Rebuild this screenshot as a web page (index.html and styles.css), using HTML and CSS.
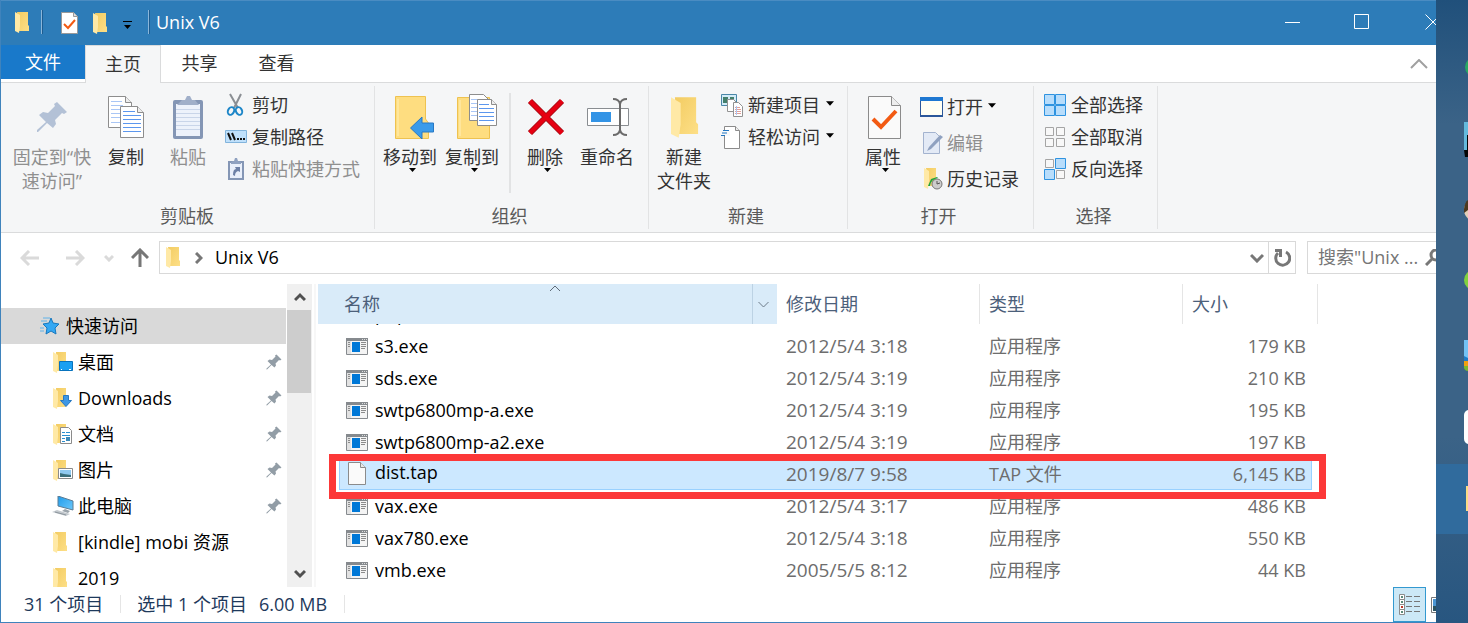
FILE: index.html
```html
<!DOCTYPE html>
<html lang="zh-CN">
<head>
    <meta charset="UTF-8">
    <meta name="viewport" content="width=device-width, initial-scale=1.0">
    <title>Unix V6</title>
    <link rel="stylesheet" href="styles.css">
</head>
<body>
    <!-- Shared icons -->
    <svg class="sprite" width="0" height="0" aria-hidden="true">
        <defs>
            <linearGradient id="fold" x1="0" x2="1" y1="0" y2="1">
                <stop offset="0" stop-color="#f3cc62"/><stop offset="1" stop-color="#fddf87"/>
            </linearGradient>
            <linearGradient id="screen" x1="0" x2="1" y1="0" y2="1">
                <stop offset="0" stop-color="#1f9bea"/><stop offset="1" stop-color="#6cc8fb"/>
            </linearGradient>
        </defs>
        <symbol id="folder" viewBox="0 0 15 21">
            <path d="M2 0h11v13l1 1v5H4z" fill="url(#fold)"/>
            <path d="M0 0l5 3v11l-1 7-4-2z" fill="#ffe9a6"/>
        </symbol>
        <symbol id="page" viewBox="0 0 18 23">
            <path d="M.5.5h12l5 5v17H.5z" fill="#fafafa" stroke="#8b8b8b"/>
            <path d="M12.500.5v5h5" fill="#e8e8e8" stroke="#8b8b8b"/>
        </symbol>
        <symbol id="exe" viewBox="0 0 22 17">
            <path d="M.5.5h21v16H.5z" fill="#f4f4f4" stroke="#868a8e"/>
            <path d="M0 0h22v3H0z" fill="#868a8e"/>
            <path d="M1 3h4v13H1z" fill="#e2e2e2"/>
            <path d="M2 4.500h2M2 6.500h2M2 8.500h2M15 4.500h5M15 6.500h5M15 8.500h5M15 10.500h4" stroke="#8b8b8b"/>
            <path d="M16 1.500h1M18 1.500h1M20 1.500h1" stroke="#ddd"/>
            <path d="M6 4h8v10H6z" fill="#0078d7"/>
        </symbol>
        <symbol id="pin" viewBox="0 0 32 32">
            <path d="M21 1l10 10-3 2-2-1-7 7 1 4-3 4-6-5-9 9H1v-2l9-8-7-7 4-3 5 1 7-7-1-2z"/>
        </symbol>
        <symbol id="docs" viewBox="0 0 37 43">
            <path d="M.5.5h17l6 6v25H.5z" fill="#fff" stroke="#8d8d8d"/>
            <path d="M17.500.5v6h6" fill="#eee" stroke="#8d8d8d"/>
            <path d="M3 5.500h11M3 9.500h12M3 13.500h12M3 17.500h12M3 21.500h9M3 26.500h9" stroke="#a9c6f5"/>
            <path d="M12.500 10.500h17l6 6v25h-23z" fill="#fff" stroke="#8d8d8d"/>
            <path d="M29.500 10.500v6h6" fill="#eee" stroke="#8d8d8d"/>
            <path d="M15 15.500h12M15 19.500h18M15 23.500h18M15 27.500h18M15 31.500h18M15 35.500h18" stroke="#5c97ee"/>
        </symbol>
        <symbol id="arrow" viewBox="0 0 7 4"><path d="M0 0h7L3.500 4z"/></symbol>
    </svg>

    <div class="window">
        <header class="titlebar">
            <svg class="app-icon" width="15" height="21"><use href="#folder"/></svg>
            <span class="title-sep"></span>
            <button class="quick" aria-label="属性">
                <svg width="17" height="22" viewBox="0 0 17 22"><path d="M.5.5h12l4 4v17H.5z" fill="#fff" stroke="#999"/><path d="M12.500.5v4h4" fill="#ddd" stroke="#999"/><path d="M3 12l4 4 7-8" fill="none" stroke="#f25a13" stroke-width="2"/></svg>
            </button>
            <button class="quick" aria-label="新建文件夹"><svg width="15" height="21"><use href="#folder"/></svg></button>
            <button class="quick quick-more" aria-label="自定义"><svg width="9" height="8" viewBox="0 0 9 8"><path d="M0 0h9v1H0zM1 4h7L4.500 8z"/></svg></button>
            <span class="title-sep"></span>
            <h1>Unix V6</h1>
            <div class="controls">
                <button aria-label="最小化"><svg width="16" height="16" viewBox="0 0 16 16"><path d="M0 8.500h15"/></svg></button>
                <button aria-label="最大化"><svg width="16" height="16" viewBox="0 0 16 16"><path d="M.5.5h14v14H.5z"/></svg></button>
                <button class="close" aria-label="关闭"><svg width="16" height="16" viewBox="0 0 16 16"><path d="M.5.5l15 15M15.500.5l-15 15"/></svg></button>
            </div>
        </header>

        <nav class="tabs">
            <button class="tab file">文件</button>
            <button class="tab active">主页</button>
            <button class="tab">共享</button>
            <button class="tab">查看</button>
            <button class="collapse" aria-label="折叠"><svg width="18" height="10" viewBox="0 0 18 10"><path d="M1 9l8-8 8 8" fill="none" stroke="#a0a0a0" stroke-width="2"/></svg></button>
        </nav>

        <div class="ribbon">
            <section class="group clipboard">
                <div class="group-body">
                    <button class="big pin-button" disabled>
                        <span class="big-icon"><svg width="32" height="32" fill="#b3c1d6"><use href="#pin"/></svg></span>
                        固定到“快速访问”
                    </button>
                    <button class="big">
                        <span class="big-icon"><svg width="37" height="43"><use href="#docs"/></svg></span>
                        复制
                    </button>
                    <button class="big" disabled>
                        <span class="big-icon"><svg width="30" height="43" viewBox="0 0 30 43"><rect y="4" width="30" height="39" rx="2" fill="#8496b5"/><path d="M3 8h24v32H3z" fill="#edf2fb"/><path d="M3 13.500h24M3 17.500h24M3 21.500h24M3 25.500h24M3 29.500h24M3 33.500h24" stroke="#c9d5e9"/><path d="M4 9l5-5h3l2-4h3l2 4h3l4 5z" fill="#a0afc9"/></svg></span>
                        粘贴
                    </button>
                    <div class="small-list">
                        <button class="small">
                            <svg width="22" height="24" viewBox="0 0 22 24"><path d="M5 1l8 14M16 1L9 15" stroke="#8b8f94" stroke-width="2"/><ellipse cx="6" cy="18" rx="3" ry="4" transform="rotate(25 6 18)" fill="none" stroke="#1d86c8" stroke-width="2"/><ellipse cx="14" cy="18" rx="3" ry="4" transform="rotate(-25 14 18)" fill="none" stroke="#1d86c8" stroke-width="2"/></svg>
                            剪切
                        </button>
                        <button class="small">
                            <svg width="22" height="14" viewBox="0 0 22 14"><path d="M.5.5h21v12H.5z" fill="#bfe0fb" stroke="#82b4dc"/><path d="M3 3l3 7M7 3l3 7" stroke="#111" stroke-width="2"/><path d="M12 9h2M15 9h2M18 9h2" stroke="#111" stroke-width="2"/></svg>
                            复制路径
                        </button>
                        <button class="small" disabled>
                            <svg width="22" height="23" viewBox="0 0 22 23"><path d="M4 4h14v17H4z" fill="#e9effa" stroke="#8496b5" stroke-width="2"/><path d="M6 4l3-1 1-3h2l1 3 3 1v2H6z" fill="#8fa1c0"/><path d="M8 17c0-4 1-6 3-6l-1-2h5v5l-2-1c-2 1-3 2-3 5z" fill="#6d80a6"/></svg>
                            粘贴快捷方式
                        </button>
                    </div>
                </div>
                <h2>剪贴板</h2>
            </section>

            <section class="group organize">
                <div class="group-body">
                    <button class="big">
                        <span class="big-icon"><svg width="40" height="43" viewBox="0 0 40 43"><path d="M1.500.5h30V23l3 4v15.500h-33z" fill="#fedd80" stroke="#eec250"/><path d="M4 3v37" stroke="#fff0b8"/><path d="M16.500 32L28 21v6h11.500v9H28v7z" fill="#3b9bea" stroke="#2878c4"/></svg></span>
                        移动到
                        <svg class="drop" width="7" height="4"><use href="#arrow"/></svg>
                    </button>
                    <button class="big">
                        <span class="big-icon"><svg width="41" height="46" viewBox="0 0 41 46"><path d="M1.500 3.500h32v41h-32z" fill="#fedd80" stroke="#eec250"/><path d="M4 6v36" stroke="#fff0b8"/><path d="M13.500.5h14l5 5v21h-19z" fill="#fff" stroke="#8d8d8d"/><path d="M15 5.500h10M15 9.500h10M15 13.500h8M15 17.500h8M15 21.500h8" stroke="#a9c6f5"/><path d="M21.500 5.500h14l5 5v21h-19z" fill="#fff" stroke="#8d8d8d"/><path d="M35.500 5.500v5h5" fill="#eee" stroke="#8d8d8d"/><path d="M23 10.500h10M23 14.500h15M23 18.500h15M23 22.500h15M23 26.500h15" stroke="#5c97ee"/></svg></span>
                        复制到
                        <svg class="drop" width="7" height="4"><use href="#arrow"/></svg>
                    </button>
                    <span class="group-sep"></span>
                    <button class="big">
                        <span class="big-icon centered"><svg width="38" height="38" viewBox="0 0 38 38"><path d="M3 3l32 32M35 3L3 35" stroke="#a80d15" stroke-width="6"/><path d="M3 3l32 32M35 3L3 35" stroke="#e60012" stroke-width="4"/></svg></span>
                        删除
                        <svg class="drop" width="7" height="4"><use href="#arrow"/></svg>
                    </button>
                    <button class="big">
                        <span class="big-icon centered"><svg width="42" height="40" viewBox="0 0 42 40"><path d="M.5 11.500h41v17H.5z" fill="#fff" stroke="#898d91"/><path d="M4 15h20v10H4z" fill="#3394e6"/><path d="M26 2q6 0 7 5v26q-1 5-7 5M40 2q-6 0-7 5M33 33q1 5 7 5" fill="none" stroke="#6b6b6b" stroke-width="2"/></svg></span>
                        重命名
                    </button>
                </div>
                <h2>组织</h2>
            </section>

            <section class="group create">
                <div class="group-body">
                    <button class="big">
                        <span class="big-icon centered"><svg width="29" height="41"><use href="#folder"/></svg></span>
                        新建<br>文件夹
                    </button>
                    <div class="small-list">
                        <button class="small">
                            <svg width="22" height="23" viewBox="0 0 22 23"><path d="M.5.500h15v11H.5z" fill="#d3ecf8" stroke="#4a87a8"/><path d="M2 3h5v6H2zM9 3h4v3H9z" fill="#44806c"/><path d="M6.500 5.500h6l3 3v9h-9z" fill="#fff" stroke="#929292"/><path d="M12.500 8.500h5l4 4v10h-9z" fill="#fff" stroke="#929292"/><path d="M14 13.500h5M14 15.500h6M14 17.500h6M14 19.500h6" stroke="#e0a09a"/><path d="M15.500 12v9" stroke="#a9c6f5"/></svg>
                            新建项目
                            <svg class="side-drop" width="8" height="5"><use href="#arrow"/></svg>
                        </button>
                        <button class="small">
                            <svg width="22" height="23" viewBox="0 0 22 23"><path d="M3.500.5h11l4 4v18h-15z" fill="#fff" stroke="#8b8b8b"/><path d="M14.500.5v4h4" fill="#eee" stroke="#8b8b8b"/><path d="M2 4h7v6H0z" fill="#f8f9fa"/><path d="M2 4.500h6M1 7h5M0 9.500h4" stroke="#1f74c0"/></svg>
                            轻松访问
                            <svg class="side-drop" width="8" height="5"><use href="#arrow"/></svg>
                        </button>
                    </div>
                </div>
                <h2>新建</h2>
            </section>

            <section class="group open">
                <div class="group-body">
                    <button class="big">
                        <span class="big-icon centered"><svg width="33" height="43" viewBox="0 0 33 43"><path d="M.5.5h23l9 9v33H.5z" fill="#fafafa" stroke="#8b8b8b"/><path d="M23.500.5v9h9" fill="#eee" stroke="#8b8b8b"/><path d="M5 23l8 8 15-16" fill="none" stroke="#f25a13" stroke-width="4"/></svg></span>
                        属性
                        <svg class="drop" width="7" height="4"><use href="#arrow"/></svg>
                    </button>
                    <div class="small-list">
                        <button class="small">
                            <svg width="23" height="20" viewBox="0 0 23 20"><path d="M.5.5h22v18H.5z" fill="#fffff4" stroke="#2b579a"/><path d="M0 18h23v2H0z" fill="#2b579a"/><path d="M0 0h23v4H0z" fill="#1e78d2"/></svg>
                            打开
                            <svg class="side-drop" width="8" height="5"><use href="#arrow"/></svg>
                        </button>
                        <button class="small" disabled>
                            <svg width="23" height="22" viewBox="0 0 23 22"><path d="M3.500.5h12l4 4v17h-16z" fill="#e3eaf6" stroke="#a3b3cf"/><path d="M7 19l2-4L20 3l3 2L11 17z" fill="#8fa1c0"/></svg>
                            编辑
                        </button>
                        <button class="small">
                            <svg width="23" height="22" viewBox="0 0 23 22"><path d="M6 0h10v18H8z" fill="url(#fold)"/><path d="M4 0l5 3v10l-1 8-4-2z" fill="#ffe9a6"/><circle cx="17" cy="16" r="5" fill="#ccc" stroke="#777"/><path d="M17 13v3l3-1" fill="none" stroke="#555"/><path d="M10 18q1-7 8-8l-1-1-6 2-3 7z" fill="#23a33a"/></svg>
                            历史记录
                        </button>
                    </div>
                </div>
                <h2>打开</h2>
            </section>

            <section class="group select">
                <div class="group-body">
                    <div class="small-list">
                        <button class="small">
                            <svg width="22" height="22" viewBox="0 0 22 22" fill="#b8ddfb" stroke="#2f93e0"><path d="M.5.5h10v10H.5zM11.500.5h10v10h-10zM.5 11.500h10v10H.5zM11.500 11.500h10v10h-10z"/></svg>
                            全部选择
                        </button>
                        <button class="small">
                            <svg width="22" height="22" viewBox="0 0 22 22" fill="#f8f8f8" stroke="#a5a5a5"><path d="M1.500 1.500h8v8h-8zM12.500 1.500h8v8h-8zM1.500 12.500h8v8h-8zM12.500 12.500h8v8h-8z"/></svg>
                            全部取消
                        </button>
                        <button class="small">
                            <svg width="22" height="22" viewBox="0 0 22 22"><path d="M1.500 1.500h8v8h-8zM12.500 12.500h8v8h-8z" fill="#f8f8f8" stroke="#a5a5a5"/><path d="M11.500.5h10v10h-10zM.5 11.500h10v10H.5z" fill="#b8ddfb" stroke="#2f93e0"/></svg>
                            反向选择
                        </button>
                    </div>
                </div>
                <h2>选择</h2>
            </section>
        </div>

        <div class="address-row">
            <button class="nav-button" aria-label="后退"><svg width="19" height="16" viewBox="0 0 19 16"><path d="M19 8H2M9 1L2 8l7 7" stroke="#dadada"/></svg></button>
            <button class="nav-button" aria-label="前进"><svg width="19" height="16" viewBox="0 0 19 16"><path d="M0 8h17M10 1l7 7-7 7" stroke="#dadada"/></svg></button>
            <button class="nav-button recent" aria-label="最近"><svg width="10" height="8" viewBox="0 0 10 8"><path d="M1 2l4 4 4-4" stroke="#dadada"/></svg></button>
            <button class="nav-button up" aria-label="上移"><svg width="18" height="19" viewBox="0 0 18 19"><path d="M9 19V2M1 10l8-8 8 8" stroke="#777"/></svg></button>
            <div class="address">
                <svg width="15" height="21"><use href="#folder"/></svg>
                <svg class="crumb-arrow" width="8" height="12" viewBox="0 0 8 12"><path d="M1 1l5 5-5 5" fill="none" stroke="#777" stroke-width="3"/></svg>
                <a href="#">Unix V6</a>
                <button class="history" aria-label="历史"><svg width="14" height="10" viewBox="0 0 14 10"><path d="M1 2l6 6 6-6" fill="none" stroke="#777" stroke-width="3"/></svg></button>
                <button class="refresh" aria-label="刷新"><svg width="17" height="18" viewBox="0 0 17 18"><path d="M12 3a7 7 0 1 1-8 1" fill="none" stroke="#777" stroke-width="3"/><path d="M1 0h7v8H5V3H1z" fill="#777"/></svg></button>
            </div>
            <div class="search">
                <input type="text" aria-label="搜索" placeholder="搜索&quot;Unix ...">
                <svg width="17" height="17" viewBox="0 0 17 17"><circle cx="11" cy="6" r="5" fill="none" stroke="#777" stroke-width="3"/><path d="M7 10l-6 6" stroke="#777" stroke-width="3"/></svg>
            </div>
        </div>

        <main class="content">
            <nav class="tree">
                <a class="root" href="#">
                    <svg width="22" height="20" viewBox="1 0 22 20"><path d="M12 2l2 5 6 1-4 4 1 6-5-3-5 3 1-6-4-4 6-1z" fill="#35a8f3" stroke="#1878be"/><path d="M4 2h7M2 5h6M0 12h5M1 15h4" stroke="#61b2e8"/></svg>
                    快速访问
                </a>
                <a href="#"><svg width="22" height="21" viewBox="0 0 22 21"><path d="M4 0h10v19H5z" fill="url(#fold)"/><path d="M1 0l5 3v10l-1 8-4-2z" fill="#ffe9a6"/><path d="M7.500 9.500h13v9h-13z" fill="#1ba0f2" stroke="#0873bd"/><path d="M9 17.500h1M17 17.500h2" stroke="#fff"/></svg>桌面<svg class="pinned"><use href="#pin"/></svg></a>
                <a href="#"><svg width="22" height="21" viewBox="0 0 22 21"><path d="M4 0h10v19H5z" fill="url(#fold)"/><path d="M1 0l5 3v10l-1 8-4-2z" fill="#ffe9a6"/><path d="M11.500 7.500h5v5h3l-5.500 6-5.500-6h3z" fill="#3e97e4" stroke="#2678c2"/></svg>Downloads<svg class="pinned"><use href="#pin"/></svg></a>
                <a href="#"><svg width="22" height="21" viewBox="0 0 22 21"><path d="M4 0h10v19H5z" fill="url(#fold)"/><path d="M1 0l5 3v10l-1 8-4-2z" fill="#ffe9a6"/><path d="M8.500 3.500h8l3 3v13h-11z" fill="#fff" stroke="#8b8b8b"/><path d="M10 8.500h3M14 8.500h4M10 11.500h8M10 14.500h3M10 17.500h3" stroke="#2c8fd0"/><path d="M14 13h4v4h-4z" fill="#3d89b8"/></svg>文档<svg class="pinned"><use href="#pin"/></svg></a>
                <a href="#"><svg width="22" height="21" viewBox="0 0 22 21"><path d="M4 0h10v19H5z" fill="url(#fold)"/><path d="M1 0l5 3v10l-1 8-4-2z" fill="#ffe9a6"/><path d="M6.500 8.500h14v10h-14z" fill="#fff" stroke="#8b8b8b"/><path d="M8 10h11v7H8z" fill="#8fc9f0"/><path d="M8 13l4 1 7 1v2H8z" fill="#3b6f7c"/></svg>图片<svg class="pinned"><use href="#pin"/></svg></a>
                <a href="#"><svg width="22" height="21" viewBox="0 0 22 21"><path d="M6 0l15 5v9L6 10z" fill="url(#screen)" stroke="#5b7c94"/><path d="M13 13l5 2-2 2-6-2z" fill="#9aa3aa"/><path d="M0 16l5-2 13 4-4 2z" fill="#c3c9ce"/><path d="M3 16l11 3" stroke="#8d969d"/></svg>此电脑<svg class="pinned"><use href="#pin"/></svg></a>
                <a href="#"><svg width="22" height="21" viewBox="-1 0 22 21"><path d="M2 0h11v13l1 1v5H4z" fill="url(#fold)"/><path d="M0 0l5 3v11l-1 7-4-2z" fill="#ffe9a6"/></svg>[kindle] mobi 资源</a>
                <a href="#"><svg width="22" height="21" viewBox="-1 0 22 21"><path d="M2 0h11v13l1 1v5H4z" fill="url(#fold)"/><path d="M0 0l5 3v11l-1 7-4-2z" fill="#ffe9a6"/></svg>2019</a>
            </nav>
            <div class="scrollbar">
                <button aria-label="向上"><svg width="12" height="10" viewBox="0 0 12 10"><path d="M1 8l5-5 5 5" fill="none" stroke="#505050" stroke-width="3"/></svg></button>
                <div class="thumb"></div>
                <button class="down" aria-label="向下"><svg width="12" height="10" viewBox="0 0 12 10"><path d="M1 2l5 5 5-5" fill="none" stroke="#505050" stroke-width="3"/></svg></button>
            </div>
            <div class="files">
                <table>
                    <colgroup><col class="col-name"><col class="col-date"><col class="col-date"><col class="col-size"></colgroup>
                    <thead>
                        <tr>
                            <th class="sorted">
                                <div class="sorted-head">
                                    <span>名称</span>
                                    <svg class="sort-mark" width="12" height="7" viewBox="0 0 12 7"><path d="M1 6l5-5 5 5" fill="none" stroke="#5f6b78"/></svg>
                                    <button aria-label="筛选"><svg width="11" height="7" viewBox="0 0 11 7"><path d="M.5 1l5 5 5-5" fill="none" stroke="#6d7a88"/></svg></button>
                                </div>
                            </th>
                            <th>修改日期</th>
                            <th>类型</th>
                            <th>大小</th>
                        </tr>
                    </thead>
                    <tbody>
                        <tr class="cut"><td colspan="4"><div>pdp9.exe</div></td></tr>
                        <tr><td><svg width="22" height="17"><use href="#exe"/></svg>s3.exe</td><td>2012/5/4 3:18</td><td>应用程序</td><td>179 KB</td></tr>
                        <tr><td><svg width="22" height="17"><use href="#exe"/></svg>sds.exe</td><td>2012/5/4 3:19</td><td>应用程序</td><td>210 KB</td></tr>
                        <tr><td><svg width="22" height="17"><use href="#exe"/></svg>swtp6800mp-a.exe</td><td>2012/5/4 3:19</td><td>应用程序</td><td>195 KB</td></tr>
                        <tr><td><svg width="22" height="17"><use href="#exe"/></svg>swtp6800mp-a2.exe</td><td>2012/5/4 3:19</td><td>应用程序</td><td>197 KB</td></tr>
                        <tr class="selected"><td><svg width="22" height="23"><use href="#page"/></svg>dist.tap</td><td>2019/8/7 9:58</td><td>TAP 文件</td><td>6,145 KB</td></tr>
                        <tr><td><svg width="22" height="17"><use href="#exe"/></svg>vax.exe</td><td>2012/5/4 3:17</td><td>应用程序</td><td>486 KB</td></tr>
                        <tr><td><svg width="22" height="17"><use href="#exe"/></svg>vax780.exe</td><td>2012/5/4 3:18</td><td>应用程序</td><td>550 KB</td></tr>
                        <tr><td><svg width="22" height="17"><use href="#exe"/></svg>vmb.exe</td><td>2005/5/5 8:12</td><td>应用程序</td><td>44 KB</td></tr>
                    </tbody>
                </table>
            </div>
        </main>

        <footer class="statusbar">
            <span>31 个项目</span>
            <span class="status-sep"></span>
            <span>选中 1 个项目</span>
            <span class="total">6.00 MB</span>
            <span class="status-sep"></span>
            <div class="views">
                <button class="view on" aria-label="详细信息"><svg width="21" height="21" viewBox="0 0 21 21"><path d="M.5.5h5v5h-5zM.5 5.500h5v5h-5zM.5 10.500h5v5h-5zM.5 15.500h5v5h-5z" fill="#fff" stroke="#8b8b8b"/><path d="M7 2.500h6M15 2.500h6M7 7.500h6M15 7.500h6M7 12.500h6M15 12.500h6M7 17.500h6M15 17.500h6" stroke="#777"/><path d="M2 2h2v2H2zM2 7h2v2H2zM2 17h2v2H2z" fill="#5b8a7a"/><path d="M2 12h2v2H2z" fill="#c0392b"/></svg></button>
                <button class="view" aria-label="大图标"><svg width="20" height="16" viewBox="0 0 20 16"><path d="M.5.5h19v15H.5z" fill="#fff" stroke="#777"/><path d="M2 2h16v12H2z" fill="#4b95d2"/><path d="M2 9h16v5H2z" fill="#2b5360"/></svg></button>
            </div>
        </footer>
    </div>

    <!-- Desktop behind the window -->
    <aside class="desktop">
        <svg width="32" height="623" viewBox="0 0 32 623">
            <path d="M0 464h32v70H0z" fill="#306b9d"/>
            <circle cx="39" cy="67" r="10" fill="#27a862"/>
            <path d="M28 122h4v29h-4z" fill="#64b9dc"/><path d="M31 135h1v15h-1zM28 150h4v7h-3z" fill="#060606"/>
            <circle cx="39" cy="210" r="11" fill="#e3cfb9"/><path d="M28 209q1-7 4-9v10l-4 3z" fill="#4b3920"/>
            <circle cx="38" cy="280" r="10" fill="#82d13e"/>
            <path d="M28 340h4v20h-4z" fill="#73c2f5"/><path d="M28 356l4 2v4h-4z" fill="#1e7cc8"/><path d="M28 361h4v5h-4z" fill="#f0a010"/><path d="M28 366h4v5q-3 0-4-3z" fill="#7cb82f"/>
            <rect x="28" y="410" width="12" height="34" rx="5" fill="#fff"/>
            <path d="M30 486h2v25h-2z" fill="#fbdc86"/>
        </svg>
    </aside>
</body>
</html>
```

FILE: styles.css
```css
* {
    box-sizing: border-box;
}
body {
    display: flex;
    min-height: 100vh;
    margin: 0;
    overflow: hidden;
    font-family: "Open Sans", "Noto Sans CJK SC", sans-serif;
    font-size: 18px;
    line-height: 24px;
    color: #000;
}
button {
    padding: 0;
    border: none;
    background: none;
    font: inherit;
    color: #333;
}
button:disabled {
    color: #8f8f8f;
}
a {
    color: inherit;
    text-decoration: none;
}
svg {
    display: block;
    flex: none;
}
h1, h2 {
    margin: 0;
    font-size: 18px;
    font-weight: normal;
}
.sprite {
    position: absolute;
}
.window {
    display: flex;
    flex-direction: column;
    flex: 1;
    min-width: 0;
    overflow: hidden;
    background-color: #fff;
    border-left: 1px solid #3f83bc;
    border-bottom: 1px solid #3f83bc;
}
.desktop {
    flex: none;
    width: 32px;
    background: linear-gradient(#20507b, #3b6387 20%, #3b6387 70%, #285680);
}

/* Title bar */
.titlebar {
    display: flex;
    align-items: center;
    height: 45px;
    padding: 0 0 2px 14px;
    background-color: #2d7cb8;
    border-top: 1px solid #4a8cc2;
    color: #fff;
}
.title-sep {
    width: 2px;
    height: 24px;
    margin-left: 11px;
    background-color: #8ab6da;
    border-right: 1px solid #1d5c90;
}
.quick {
    margin-left: 18px;
    padding-top: 2px;
}
.quick + .quick {
    margin-left: 15px;
}
.quick-more {
    padding-top: 6px;
}
.titlebar .quick-more + .title-sep {
    margin-left: 16px;
}
.titlebar h1 {
    margin-left: 6px;
}
.controls {
    display: flex;
    margin-left: auto;
}
.controls button {
    display: flex;
    justify-content: center;
    width: 69px;
}
.controls .close {
    justify-content: flex-start;
    width: 40px;
    padding-left: 29px;
}
.controls svg {
    fill: none;
    stroke: #fff;
}

/* Ribbon tabs */
.tabs {
    display: flex;
    height: 38px;
    border-bottom: 1px solid #dadbdc;
}
.tab {
    width: 77px;
    padding-bottom: 1px;
}
.tab.file {
    width: 84px;
    height: 34px;
    background-color: #1979ca;
    color: #fff;
}
.tab.active {
    width: 76px;
    height: 38px;
    background-color: #f5f6f7;
    border: 1px solid #dadbdc;
    border-bottom: none;
}
.collapse {
    margin-left: auto;
    margin-right: 8px;
}

/* Ribbon */
.ribbon {
    display: flex;
    height: 150px;
    padding: 3px 0;
    background-color: #f5f6f7;
    border-bottom: 1px solid #dadbdc;
}
.group {
    display: flex;
    flex: none;
    flex-direction: column;
    border-right: 1px solid #e2e3e4;
}
.group h2 {
    margin-bottom: 1px;
    padding-right: 4px;
    text-align: center;
    color: #5a5a5a;
}
.group-body {
    display: flex;
    flex: 1;
    padding: 3px 4px 0;
}
.clipboard {
    width: 374px;
}
.clipboard .group-body {
    padding-left: 8px;
}
.clipboard h2 {
    padding-right: 1px;
}
.organize {
    width: 274px;
}
.create {
    width: 199px;
}
.open {
    width: 186px;
}
.select {
    width: 124px;
}
.big {
    display: flex;
    flex-direction: column;
    align-items: center;
    align-self: flex-start;
    width: 62px;
    white-space: nowrap;
}
.pin-button {
    width: 86px;
    padding: 0 2px;
    white-space: normal;
}
.big-icon {
    display: flex;
    align-items: center;
    justify-content: center;
    height: 56px;
}
.organize .big-icon {
    padding-left: 8px;
}
.big-icon.centered {
    padding-left: 2px;
}
.drop {
    margin: -1px 0 0 4px;
}
.group-sep {
    width: 2px;
    height: 100px;
    margin: 4px 3px 0 6px;
    background-color: #e2e3e4;
}
.small-list {
    display: flex;
    flex-direction: column;
    margin-left: 6px;
}
.small {
    display: flex;
    align-items: center;
    gap: 5px;
    height: 32px;
    white-space: nowrap;
}
.open .small {
    gap: 4px;
    height: 36px;
}
.side-drop {
    margin: 0 0 3px 1px;
}

/* Address bar */
.address-row {
    display: flex;
    align-items: center;
    height: 51px;
    padding: 0 0 2px 19px;
}
.nav-button {
    margin-right: 27px;
}
.nav-button svg {
    fill: none;
    stroke-width: 3;
}
.nav-button + .nav-button {
    margin-right: 19px;
}
.nav-button + .nav-button.recent {
    margin-right: 17px;
}
.nav-button + .nav-button.up {
    margin-right: 10px;
}
.address {
    display: flex;
    flex: 1;
    align-items: center;
    height: 33px;
    padding-left: 6px;
    border: 1px solid #d9d9d9;
}
.address a {
    padding-bottom: 2px;
}
.crumb-arrow {
    margin: 0 12px 0 14px;
}
.history {
    margin-left: auto;
    margin-right: 4px;
}
.refresh {
    display: flex;
    align-items: center;
    justify-content: center;
    width: 27px;
    height: 31px;
    border-left: 1px solid #d9d9d9;
}
.search {
    display: flex;
    align-items: center;
    width: 129px;
    height: 33px;
    margin-left: 11px;
    padding-left: 10px;
    overflow: hidden;
    border: 1px solid #d9d9d9;
    border-right: none;
}
.search input {
    flex: none;
    width: 107px;
    padding: 0 0 2px;
    border: none;
    outline: none;
    font: inherit;
}
.search input::placeholder {
    color: #767676;
}

/* Navigation pane */
.content {
    display: flex;
    height: 303px;
    overflow: hidden;
}
.tree {
    flex: none;
    width: 285px;
    padding-top: 24px;
}
.tree a {
    display: flex;
    align-items: center;
    gap: 4px;
    height: 36px;
    padding: 0 4px 0 51px;
}
.tree .root {
    padding-left: 39px;
    background-color: #d9d9d9;
}
.pinned {
    width: 16px;
    height: 16px;
    margin-left: auto;
    fill: #929da6;
}
.scrollbar {
    display: flex;
    flex: none;
    flex-direction: column;
    width: 25px;
    margin-left: 1px;
    background-color: #f0f0f0;
}
.scrollbar button {
    display: flex;
    align-items: center;
    justify-content: center;
    height: 26px;
}
.scrollbar .down {
    margin-top: auto;
}
.thumb {
    width: 24px;
    height: 83px;
    background-color: #cdcdcd;
}

/* File list */
.files {
    flex: 1;
    min-width: 0;
    margin-left: 2px;
    padding-left: 2px;
    border-left: 2px solid #f7f7f7;
}
.files table {
    width: 1000px;
    table-layout: fixed;
    border-collapse: separate;
    border-spacing: 0;
}
.col-name {
    width: 459px;
}
.col-date {
    width: 203px;
}
.col-size {
    width: 135px;
}
.files th {
    height: 40px;
    padding: 0 0 0 9px;
    border-right: 1px solid #e5e5e5;
    font-weight: normal;
    text-align: left;
    color: #4c607a;
}
.files th.sorted {
    padding-left: 26px;
    background-color: #d9ebf9;
    border-right: none;
}
.sorted-head {
    display: flex;
    position: relative;
    align-items: center;
    height: 40px;
}
.sort-mark {
    position: absolute;
    top: 1px;
    left: 205px;
}
.sorted-head button {
    display: flex;
    align-items: center;
    justify-content: center;
    width: 25px;
    height: 40px;
    margin-left: auto;
    padding-right: 3px;
    border-left: 1px solid #bcd2e4;
}
.files td {
    height: 32px;
    padding: 0 0 0 9px;
    color: #6d6d6d;
}
.files td:first-child {
    padding-left: 28px;
    color: #000;
}
.files td:nth-child(2) {
    font-size: 19px;
}
.files td:last-child {
    padding-right: 12px;
    text-align: right;
}
.files td svg {
    display: inline-block;
    margin: 0 7px 3px 0;
    vertical-align: middle;
}
.files .cut td {
    height: 6px;
    padding-left: 57px;
    text-align: left;
}
.cut div {
    display: flex;
    align-items: flex-end;
    height: 6px;
    padding-bottom: 4px;
    overflow: hidden;
    line-height: 24px;
}
.cut td {
    vertical-align: top;
}
.selected {
    position: relative;
    background: linear-gradient(#cce8ff, #cce8ff) 21px 0 / 973px 100% no-repeat;
}
.selected td:first-child::before {
    content: "";
    position: absolute;
    inset: 0 6px 0 21px;
    border: 1px solid #99d1ff;
}
/* red marker around the file */
.selected td:first-child::after {
    content: "";
    position: absolute;
    inset: -4px -8px -9px 11px;
    border: 7px solid #fc3838;
}

/* Status bar */
.statusbar {
    display: flex;
    flex: 1;
    height: 35px;
    padding-left: 23px;
    line-height: 34px;
    color: #1e395b;
}
.status-sep {
    width: 1px;
    height: 18px;
    margin: 8px 16px 8px 17px;
    background-color: #e5e5e5;
}
.total {
    margin-left: 12px;
}
.views {
    display: flex;
    gap: 5px;
    width: 43px;
    margin-left: auto;
    overflow: hidden;
}
.view {
    display: flex;
    flex: none;
    align-items: center;
    justify-content: center;
}
.view.on {
    width: 33px;
    height: 35px;
    background-color: #cce8f6;
    border: 1px solid #3399d0;
}
```
